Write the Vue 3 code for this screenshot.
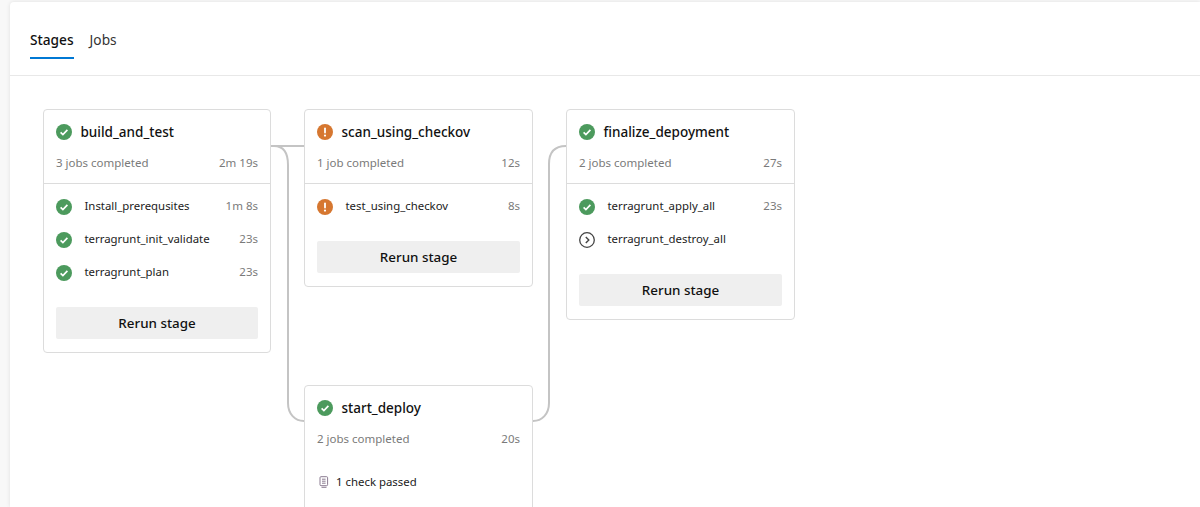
<script setup>
const stages = [
  { name: 'build_and_test', status: 'ok', summary: '3 jobs completed', time: '2m 19s', pos: 'p1',
    jobs: [
      { name: 'Install_prerequsites', status: 'ok', time: '1m 8s' },
      { name: 'terragrunt_init_validate', status: 'ok', time: '23s' },
      { name: 'terragrunt_plan', status: 'ok', time: '23s' }
    ], rerun: true },
  { name: 'scan_using_checkov', status: 'warn', summary: '1 job completed', time: '12s', pos: 'p2',
    jobs: [{ name: 'test_using_checkov', status: 'warn', time: '8s' }], rerun: true },
  { name: 'finalize_depoyment', status: 'ok', summary: '2 jobs completed', time: '27s', pos: 'p3',
    jobs: [
      { name: 'terragrunt_apply_all', status: 'ok', time: '23s' },
      { name: 'terragrunt_destroy_all', status: 'skip', time: '' }
    ], rerun: true },
  { name: 'start_deploy', status: 'ok', summary: '2 jobs completed', time: '20s', pos: 'p4', check: '1 check passed', jobs: [], rerun: false }
]
</script>

<template>
  <div class="page">
    <div class="panel">
      <nav class="tabs">
        <span class="tab active">Stages</span>
        <span class="tab">Jobs</span>
      </nav>
      <div class="board">
        <svg class="lines" width="1190" height="431" viewBox="0 0 1190 431" fill="none">
          <path d="M261 70H294" />
          <path d="M261 70H264C273 70 278 76 278 89V327C278 338 285 345 294 345" />
          <path d="M523 345C532 345 539 338 539 327V88C539 76 545 70 556 70" />
        </svg>
        <section v-for="s in stages" :key="s.name" class="card" :class="s.pos">
          <header class="head">
            <div class="title-row">
              <svg v-if="s.status === 'ok'" class="ico" viewBox="0 0 16 16"><circle cx="8" cy="8" r="8" fill="#4c9a5d"/><path d="M4.6 8.3l2.3 2.2 4.5-4.6" fill="none" stroke="#fff" stroke-width="1.7"/></svg>
              <svg v-else class="ico" viewBox="0 0 16 16"><circle cx="8" cy="8" r="8" fill="#d67730"/><rect x="7.1" y="3.4" width="1.8" height="6" rx=".9" fill="#fff"/><circle cx="8" cy="11.6" r="1.1" fill="#fff"/></svg>
              <h3 class="title">{{ s.name }}</h3>
            </div>
            <div class="meta"><span>{{ s.summary }}</span><span>{{ s.time }}</span></div>
          </header>
          <div v-if="s.jobs.length" class="jobs">
            <div v-for="j in s.jobs" :key="j.name" class="job">
              <svg v-if="j.status === 'ok'" class="ico" viewBox="0 0 16 16"><circle cx="8" cy="8" r="8" fill="#4c9a5d"/><path d="M4.6 8.3l2.3 2.2 4.5-4.6" fill="none" stroke="#fff" stroke-width="1.7"/></svg>
              <svg v-else-if="j.status === 'warn'" class="ico" viewBox="0 0 16 16"><circle cx="8" cy="8" r="8" fill="#d67730"/><rect x="7.1" y="3.4" width="1.8" height="6" rx=".9" fill="#fff"/><circle cx="8" cy="11.6" r="1.1" fill="#fff"/></svg>
              <svg v-else class="ico" viewBox="0 0 16 16"><circle cx="8" cy="8" r="7.3" fill="none" stroke="#444" stroke-width="1.3"/><path d="M6.8 5l3 3-3 3" fill="none" stroke="#444" stroke-width="1.4"/></svg>
              <span class="job-name">{{ j.name }}</span>
              <span class="job-time">{{ j.time }}</span>
            </div>
          </div>
          <div v-if="s.rerun" class="action"><button class="rerun" type="button">Rerun stage</button></div>
          <div v-if="s.check" class="check">
            <svg class="chk" viewBox="0 0 10 12" fill="none"><rect x="1" y=".7" width="7.6" height="9" rx="1" stroke="#8a7a90"/><path d="M3 3.2h3.6M3 5.2h3.6M3 7.2h3.6M2.5 11.3h5" stroke="#8a7a90"/></svg>
            <span>{{ s.check }}</span>
          </div>
        </section>
      </div>
    </div>
  </div>
</template>

<style>
html, body { margin: 0; background: #f8f8f8; overflow: hidden; }
</style>

<style scoped>
.page {
  width: 1200px;
  height: 507px;
  padding: 2px 0 0 10px;
  box-sizing: border-box;
  overflow: hidden;
  font-family: "Noto Sans", "Open Sans", sans-serif;
  color: #1c1c1c;
}
.panel {
  height: 505px;
  background: #fff;
  border-radius: 4px 0 0 0;
  box-shadow: 0 0 4px rgba(0, 0, 0, .1);
  display: flex;
  flex-direction: column;
}
.tabs {
  height: 74px;
  box-sizing: border-box;
  padding: 27px 0 0 20px;
  display: flex;
  gap: 16px;
  border-bottom: 1px solid #e8e8e8;
}
.tab {
  font-size: 13.7px;
  line-height: 22px;
  height: 30px;
  box-sizing: border-box;
  color: #333;
}
.tab.active {
  color: #111;
  font-weight: 500;
  border-bottom: 2px solid #0078d4;
}
.board { position: relative; flex: 1; overflow: hidden; }
.lines { position: absolute; left: 0; top: 0; }
.lines path { stroke: #c4c4c4; stroke-width: 2; }
.card {
  position: absolute;
  box-sizing: border-box;
  background: #fff;
  border: 1px solid #dcdcdc;
  border-radius: 4px;
}
.p1 { left: 33px; top: 33px; width: 228px; }
.p2 { left: 294px; top: 33px; width: 229px; }
.p3 { left: 556px; top: 33px; width: 229px; }
.p4 { left: 294px; top: 309px; width: 229px; min-height: 200px; }
.head { padding: 12px 12px 0; }
.title-row { display: flex; align-items: center; gap: 8.5px; height: 20px; }
.ico { width: 16px; height: 16px; flex: none; }
.title { margin: 0; font-size: 13.5px; line-height: 20px; font-weight: 500; color: #111; }
.meta {
  display: flex;
  justify-content: space-between;
  font-size: 11.5px;
  line-height: 18px;
  color: #7a7a7a;
  margin-top: 12px;
  padding-bottom: 11px;
}
.jobs {
  border-top: 1px solid #dcdcdc;
  padding: 6px 12px 0;
}
.job { display: flex; align-items: center; height: 33px; font-size: 11.4px; color: #222; }
.job-name { margin: -2px 0 0 12.5px; flex: 1; }
.job-time { color: #7a7a7a; font-size: 11.5px; margin-top: -2px; }
.action { padding: 18px 12px 13px; }
.rerun {
  display: block;
  width: 100%;
  height: 32px;
  border: 0;
  border-radius: 2px;
  background: #efefef;
  font: 500 13.4px/20px "Noto Sans", "Open Sans", sans-serif;
  color: #111;
  padding: 0 0 1px;
}
.check {
  display: flex;
  align-items: center;
  gap: 7px;
  padding: 14px 12px 0 14px;
  font-size: 11.4px;
  line-height: 18px;
  color: #222;
}
.chk { width: 10px; height: 12px; }
</style>
